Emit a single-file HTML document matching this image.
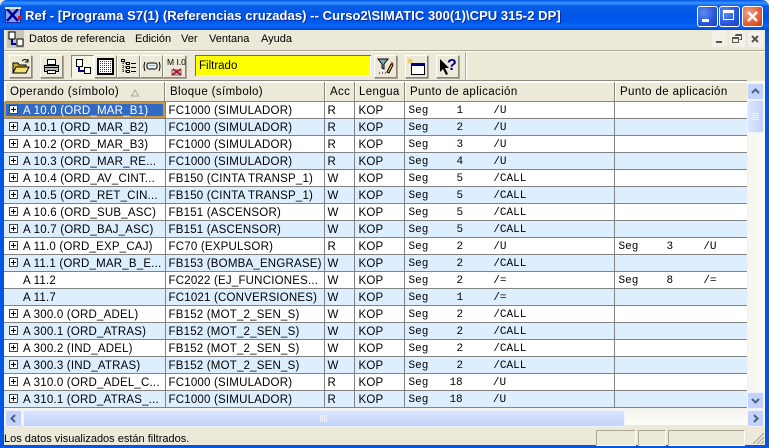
<!DOCTYPE html>
<html><head><meta charset="utf-8"><style>
html,body{margin:0;padding:0}
body{width:769px;height:448px;overflow:hidden;position:relative;background:#ece9d8;font:11px "Liberation Sans",sans-serif;color:#000}
.a{position:absolute}
#tb{left:0;top:0;width:769px;height:30px;background:linear-gradient(#0058e6 0,#3a93ff 3px,#0a5fe8 6px,#0055e5 14px,#0058ee 22px,#0a6af5 26px,#0046d5 30px);border-radius:7px 7px 0 0}
#title{left:25px;top:8px;color:#fff;font:bold 13px "Liberation Sans",sans-serif;white-space:pre;text-shadow:1px 1px 0 #0a2a9a;letter-spacing:.06px}
.wb{top:6px;width:19px;height:19px;border:1px solid #fff;border-radius:3px;box-sizing:content-box;background:radial-gradient(circle at 30% 30%,#5a8cf0,#2a55d8 60%,#1a3ec0)}
.lb,.rb,.bb{background:#0055e5}
#mn{left:4px;top:30px;width:761px;height:20px;background:#ece9d8}
.m{top:33px;white-space:pre}
.hr{left:4px;width:761px;height:1px}
.btn{top:55px;width:21px;height:21px;background:#ece9d8;border:1px solid;border-color:#fff #8a887a #8a887a #fff;box-shadow:1px 1px 0 #aca899}
.btn svg{position:absolute;left:0;top:0}
#filt{left:195px;top:55px;width:176px;height:21px;background:#ff0;box-shadow:inset 1px 1px 0 #716f64,inset -1px -1px 0 #fff;line-height:22px;text-indent:4px;font-size:11.5px}
#grid{left:4px;top:80px;width:743px;height:328px;overflow:hidden;border-top:1px solid #8a887a;background:#fff}
.hd{top:1px;height:19px;line-height:20px;background:#ece9d8;border-right:1px solid #8a887a;box-shadow:inset 1px 1px 0 #fff;border-bottom:1px solid #8a887a;white-space:nowrap;text-indent:5px;font-size:11.5px;letter-spacing:.38px}
table{position:absolute;left:0;top:21px;border-collapse:collapse;table-layout:fixed;width:743px}
td{height:14px;padding:2px 0 0 3px;border-right:1px solid #828282;border-bottom:1px solid #828282;white-space:pre;overflow:hidden;line-height:14px;font-size:11.5px;letter-spacing:.2px}
tr:nth-child(even) td{background:#ddeeff}
td.c1{padding-left:19px;position:relative}
td.k{padding-left:4px}
.p{display:block;position:absolute;left:5px;top:3px;width:7px;height:7px;border:1px solid #444;background:#fff}
.p:before{content:"";position:absolute;left:1px;top:3px;width:5px;height:1px;background:#000}
.p:after{content:"";position:absolute;left:3px;top:1px;width:1px;height:5px;background:#000}
td.s{font:11px "Liberation Mono",monospace;letter-spacing:0;word-spacing:.45px;padding:3px 0 0 4px;height:13px;line-height:13px}
td.s u{text-decoration:none;margin-left:2px}
td.sel{background:#316ac5!important;color:#fff;box-shadow:inset 0 0 0 2px #c8963c;}
.sb{background:linear-gradient(90deg,#f5f4ec,#fdfdfa)}
.sbh{background:linear-gradient(#f5f4ec,#fdfdfa)}
.sbtn{width:15px;height:15px;border:1px solid #eef2ff;border-radius:2px;background:#c3d3fb}
.sbtn svg{position:absolute;left:0;top:0}
.panel{top:430px;height:14px;border:1px solid;border-color:#aca899 #fff #fff #aca899}
</style></head><body>
<div class="a" id="tb"></div>
<div class="a lb" style="left:0;top:30px;width:4px;height:418px"></div>
<div class="a rb" style="left:765px;top:30px;width:4px;height:418px"></div>
<div class="a bb" style="left:0;top:445px;width:769px;height:3px"></div>
<svg class="a" style="left:5px;top:7px" width="16" height="16"><rect width="16" height="16" fill="#1a2ab0"/><rect x="1" y="1" width="14" height="14" fill="#8aa6e0"/><path d="M2 2l11 12M13 2L2 14" stroke="#0000a0" stroke-width="2.5"/><rect x="13" y="9" width="3" height="4" fill="#c02020"/><rect x="0" y="0" width="16" height="2" fill="#e8e8d0"/></svg>
<div class="a" id="title">Ref - [Programa S7(1) (Referencias cruzadas) -- Curso2\SIMATIC 300(1)\CPU 315-2 DP]</div>
<div class="a wb" style="left:697px"><div class="a" style="left:4px;top:12px;width:7px;height:3px;background:#fff"></div></div>
<div class="a wb" style="left:719px"><div class="a" style="left:3px;top:3px;width:11px;height:10px;border:1px solid #fff;border-top:3px solid #fff;box-sizing:border-box"></div></div>
<div class="a wb" style="left:742px;background:radial-gradient(circle at 30% 30%,#f0a080,#e0603a 60%,#c83a18)"><svg class="a" style="left:0;top:0" width="19" height="19"><path d="M5 5l9 9M14 5l-9 9" stroke="#fff" stroke-width="2.4"/></svg></div>

<div class="a" id="mn"></div>
<svg class="a" style="left:7px;top:30px" width="17" height="18"><rect width="17" height="18" fill="#c8c6ba"/><rect x="2" y="2" width="6" height="7" fill="#fff" stroke="#000"/><rect x="10" y="9" width="6" height="7" fill="#fff" stroke="#000"/><path d="M5 9v5h4" fill="none" stroke="#0000a0" stroke-width="2"/></svg>
<div class="a m" style="left:29px">Datos de referencia</div>
<div class="a m" style="left:135px">Edición</div>
<div class="a m" style="left:181px">Ver</div>
<div class="a m" style="left:209px">Ventana</div>
<div class="a m" style="left:261px">Ayuda</div>
<div class="a" style="left:712px;top:31px;width:15px;height:16px;background:#f3f1e6"><div class="a" style="left:4px;top:10px;width:6px;height:2px;background:#555"></div></div>
<div class="a" style="left:730px;top:31px;width:15px;height:16px;background:#f3f1e6"><svg class="a" style="left:0;top:0" width="15" height="16"><path d="M5.5 3.5h6v5h-2M2.5 6.5h6v5h-6z M5 4.5h6 M2 7.5h6" fill="none" stroke="#555"/></svg></div>
<div class="a" style="left:748px;top:31px;width:15px;height:16px;background:#f3f1e6"><svg class="a" style="left:0;top:0" width="15" height="16"><path d="M4 5l6 6M10 5l-6 6" stroke="#555" stroke-width="2"/></svg></div>
<div class="a hr" style="top:50px;background:#aca899"></div>
<div class="a hr" style="top:51px;background:#fff"></div>

<div class="a btn" style="left:9px"><svg width="21" height="21"><path d="M3 7h5l1 2h7v8H3z" fill="#c8b020" stroke="#000"/><path d="M3 17l3-6h13l-3 6z" fill="#f0e070" stroke="#000"/><path d="M12 5q3-3 6 0" fill="none" stroke="#000"/><path d="M18 3v3h-3" fill="none" stroke="#000"/></svg></div>
<div class="a btn" style="left:40px"><svg width="21" height="21"><path d="M6.500 3.500h8v5h-8z" fill="#fff" stroke="#000"/><path d="M3.500 9.500h14v6h-14z" fill="#b8b8b8" stroke="#000"/><path d="M6.500 14.500h8v3h-8z" fill="#fff" stroke="#000"/><path d="M4 11.500h13" stroke="#000"/></svg></div>
<div class="a btn" style="left:71px;border-color:#8a887a #fff #fff #8a887a;box-shadow:none;background:repeating-conic-gradient(#fff 0 25%,#ece9d8 0 50%) 0 0/2px 2px"><svg width="21" height="21"><rect x="4.500" y="3.500" width="6" height="7" fill="#fff" stroke="#000"/><rect x="12.500" y="11.500" width="6" height="6" fill="#fff" stroke="#000"/><path d="M7 10v5h5" fill="none" stroke="#00008a" stroke-width="2"/></svg></div>
<div class="a btn" style="left:94px"><svg width="21" height="21"><rect x="3" y="3" width="15" height="15" fill="#fff" stroke="#000" stroke-width="2"/><path d="M5 5.500h11M5 7.500h11M5 9.500h11M5 11.500h11M5 13.500h11M5 15.500h11" stroke="#2030c0" stroke-dasharray="1 1"/></svg></div>
<div class="a btn" style="left:117px"><svg width="21" height="21"><path d="M5 3v13M5 7h4M5 11h4M5 15h4" stroke="#000" stroke-dasharray="1 1" fill="none"/><path d="M3.500 3.500h3v2h-3zM8.500 6.500h3v2h-3zM8.500 10.500h3v2h-3zM8.500 14.500h3v2h-3z" fill="#fff" stroke="#000"/><path d="M13 7.500h5M13 11.500h5M13 15.500h5" stroke="#000"/></svg></div>
<div class="a btn" style="left:140px"><svg width="21" height="21"><rect x="6" y="7" width="10" height="6" rx="2" fill="#e8f4fa" stroke="#000"/><path d="M8 9.500h6" stroke="#60c0d0"/><path d="M4 6q-2 4 0 9M18 6q2 4 0 9" fill="none" stroke="#000"/></svg></div>
<div class="a btn" style="left:163px"><span class="a" style="left:3px;top:1px;font:8.500px 'Liberation Sans',sans-serif;color:#000;white-space:pre">M I.0</span><svg width="21" height="21"><rect x="8" y="14" width="9" height="5" fill="#c8c8e8" stroke="#606080"/><path d="M8 19l9-6M9 13l8 6" stroke="#c00000" stroke-width="1.500"/></svg></div>
<div class="a" id="filt">Filtrado</div>
<div class="a btn" style="left:374px"><svg width="21" height="21"><path d="M3 3h10l-4 5v5l-2-1V8z" fill="#7fb0b0" stroke="#000"/><path d="M12 16l4-8 2 1-4 8z" fill="#e8c030" stroke="#000"/><path d="M15.500 8l1-2 2 1-1 2z" fill="#c02020"/><path d="M4 17h1M7 17h1M10 17h1" stroke="#000"/></svg></div>
<div class="a btn" style="left:405px"><svg width="21" height="21"><rect x="5.500" y="7.500" width="13" height="11" fill="#fff" stroke="#000"/><rect x="5" y="7" width="14" height="3" fill="#000080"/><path d="M4 2v6M1 5h6M2 3l4 4M6 3L2 7" stroke="#e8d040"/></svg></div>
<div class="a btn" style="left:436px"><svg width="21" height="21"><path d="M3 3v13l3-3 3 6 2-1-3-6h4z" fill="#000"/><text x="10" y="14" font-family="Liberation Sans" font-size="16" font-weight="bold" fill="#000080">?</text></svg></div>
<div class="a" style="left:465px;top:52px;width:1px;height:28px;background:#aca899"></div>
<div class="a" style="left:466px;top:52px;width:1px;height:28px;background:#fff"></div>

<div class="a" id="grid">
<div class="a hd" style="left:1px;width:159px">Operando (símbolo)<svg class="a" style="left:126px;top:7px" width="9" height="8"><path d="M4 1L0.500 7h7z" fill="none" stroke="#aca899"/></svg></div>
<div class="a hd" style="left:161px;width:159px">Bloque (símbolo)</div>
<div class="a hd" style="left:321px;width:29px">Acc</div>
<div class="a hd" style="left:351px;width:49px;text-indent:4px">Lengua</div>
<div class="a hd" style="left:401px;width:209px">Punto de aplicación</div>
<div class="a hd" style="left:611px;width:132px">Punto de aplicación</div>
<table><colgroup><col style="width:161px"><col style="width:159px"><col style="width:30px"><col style="width:50px"><col style="width:210px"><col style="width:133px"></colgroup>
<tr><td class="c1 sel"><i class="p"></i>A 10.0 (ORD_MAR_B1)</td><td>FC1000 (SIMULADOR)</td><td>R</td><td class="k">KOP</td><td class="s">Seg    1    <u>/U</u></td><td></td></tr>
<tr><td class="c1"><i class="p"></i>A 10.1 (ORD_MAR_B2)</td><td>FC1000 (SIMULADOR)</td><td>R</td><td class="k">KOP</td><td class="s">Seg    2    <u>/U</u></td><td></td></tr>
<tr><td class="c1"><i class="p"></i>A 10.2 (ORD_MAR_B3)</td><td>FC1000 (SIMULADOR)</td><td>R</td><td class="k">KOP</td><td class="s">Seg    3    <u>/U</u></td><td></td></tr>
<tr><td class="c1"><i class="p"></i>A 10.3 (ORD_MAR_RE...</td><td>FC1000 (SIMULADOR)</td><td>R</td><td class="k">KOP</td><td class="s">Seg    4    <u>/U</u></td><td></td></tr>
<tr><td class="c1"><i class="p"></i>A 10.4 (ORD_AV_CINT...</td><td>FB150 (CINTA TRANSP_1)</td><td>W</td><td class="k">KOP</td><td class="s">Seg    5    <u>/CALL</u></td><td></td></tr>
<tr><td class="c1"><i class="p"></i>A 10.5 (ORD_RET_CIN...</td><td>FB150 (CINTA TRANSP_1)</td><td>W</td><td class="k">KOP</td><td class="s">Seg    5    <u>/CALL</u></td><td></td></tr>
<tr><td class="c1"><i class="p"></i>A 10.6 (ORD_SUB_ASC)</td><td>FB151 (ASCENSOR)</td><td>W</td><td class="k">KOP</td><td class="s">Seg    5    <u>/CALL</u></td><td></td></tr>
<tr><td class="c1"><i class="p"></i>A 10.7 (ORD_BAJ_ASC)</td><td>FB151 (ASCENSOR)</td><td>W</td><td class="k">KOP</td><td class="s">Seg    5    <u>/CALL</u></td><td></td></tr>
<tr><td class="c1"><i class="p"></i>A 11.0 (ORD_EXP_CAJ)</td><td>FC70 (EXPULSOR)</td><td>R</td><td class="k">KOP</td><td class="s">Seg    2    <u>/U</u></td><td class="s">Seg    3    <u>/U</u></td></tr>
<tr><td class="c1"><i class="p"></i>A 11.1 (ORD_MAR_B_E...</td><td>FB153 (BOMBA_ENGRASE)</td><td>W</td><td class="k">KOP</td><td class="s">Seg    2    <u>/CALL</u></td><td></td></tr>
<tr><td class="c1">A 11.2</td><td>FC2022 (EJ_FUNCIONES...</td><td>W</td><td class="k">KOP</td><td class="s">Seg    2    <u>/=</u></td><td class="s">Seg    8    <u>/=</u></td></tr>
<tr><td class="c1">A 11.7</td><td>FC1021 (CONVERSIONES)</td><td>W</td><td class="k">KOP</td><td class="s">Seg    1    <u>/=</u></td><td></td></tr>
<tr><td class="c1"><i class="p"></i>A 300.0 (ORD_ADEL)</td><td>FB152 (MOT_2_SEN_S)</td><td>W</td><td class="k">KOP</td><td class="s">Seg    2    <u>/CALL</u></td><td></td></tr>
<tr><td class="c1"><i class="p"></i>A 300.1 (ORD_ATRAS)</td><td>FB152 (MOT_2_SEN_S)</td><td>W</td><td class="k">KOP</td><td class="s">Seg    2    <u>/CALL</u></td><td></td></tr>
<tr><td class="c1"><i class="p"></i>A 300.2 (IND_ADEL)</td><td>FB152 (MOT_2_SEN_S)</td><td>W</td><td class="k">KOP</td><td class="s">Seg    2    <u>/CALL</u></td><td></td></tr>
<tr><td class="c1"><i class="p"></i>A 300.3 (IND_ATRAS)</td><td>FB152 (MOT_2_SEN_S)</td><td>W</td><td class="k">KOP</td><td class="s">Seg    2    <u>/CALL</u></td><td></td></tr>
<tr><td class="c1"><i class="p"></i>A 310.0 (ORD_ADEL_C...</td><td>FC1000 (SIMULADOR)</td><td>R</td><td class="k">KOP</td><td class="s">Seg   18    <u>/U</u></td><td></td></tr>
<tr><td class="c1"><i class="p"></i>A 310.1 (ORD_ATRAS_...</td><td>FC1000 (SIMULADOR)</td><td>R</td><td class="k">KOP</td><td class="s">Seg   18    <u>/U</u></td><td></td></tr>
</table>
</div>

<div class="a sb" style="left:747px;top:81px;width:18px;height:329px"></div>
<div class="a sbh" style="left:4px;top:408px;width:761px;height:17px"></div>
<div class="a sbtn" style="left:747px;top:83px"><svg width="15" height="15"><path d="M4 9l3.500-3.500L11 9" fill="none" stroke="#4d6185" stroke-width="2"/></svg></div>
<div class="a sbtn" style="left:747px;top:100px;height:31px;background:linear-gradient(90deg,#dbe5fd,#c3d3fb)"><svg width="15" height="31"><path d="M4 12.500h7M4 14.500h7M4 16.500h7M4 18.500h7" stroke="#eef2ff"/></svg></div>
<div class="a sbtn" style="left:747px;top:392px"><svg width="15" height="15"><path d="M4 6l3.500 3.500L11 6" fill="none" stroke="#4d6185" stroke-width="2"/></svg></div>
<div class="a sbtn" style="left:5px;top:410px"><svg width="15" height="15"><path d="M9 4L5.500 7.500 9 11" fill="none" stroke="#4d6185" stroke-width="2"/></svg></div>
<div class="a sbtn" style="left:23px;top:410px;width:600px;background:linear-gradient(#dbe5fd,#c3d3fb)"><svg width="600" height="15"><path d="M296.500 4v7M298.500 4v7M300.500 4v7M302.500 4v7" stroke="#eef2ff"/></svg></div>
<div class="a sbtn" style="left:747px;top:410px"><svg width="15" height="15"><path d="M6 4l3.500 3.500L6 11" fill="none" stroke="#4d6185" stroke-width="2"/></svg></div>

<div class="a" style="left:4px;top:433px;white-space:pre">Los datos visualizados están filtrados.</div>
<div class="a panel" style="left:596px;width:38px"></div>
<div class="a panel" style="left:638px;width:26px"></div>
<div class="a panel" style="left:668px;width:75px"></div>
<svg class="a" style="left:751px;top:431px" width="14" height="14"><path d="M13 2L2 13M13 6L6 13M13 10l-3 3" stroke="#aca899" stroke-width="1.200"/></svg>
</body></html>
